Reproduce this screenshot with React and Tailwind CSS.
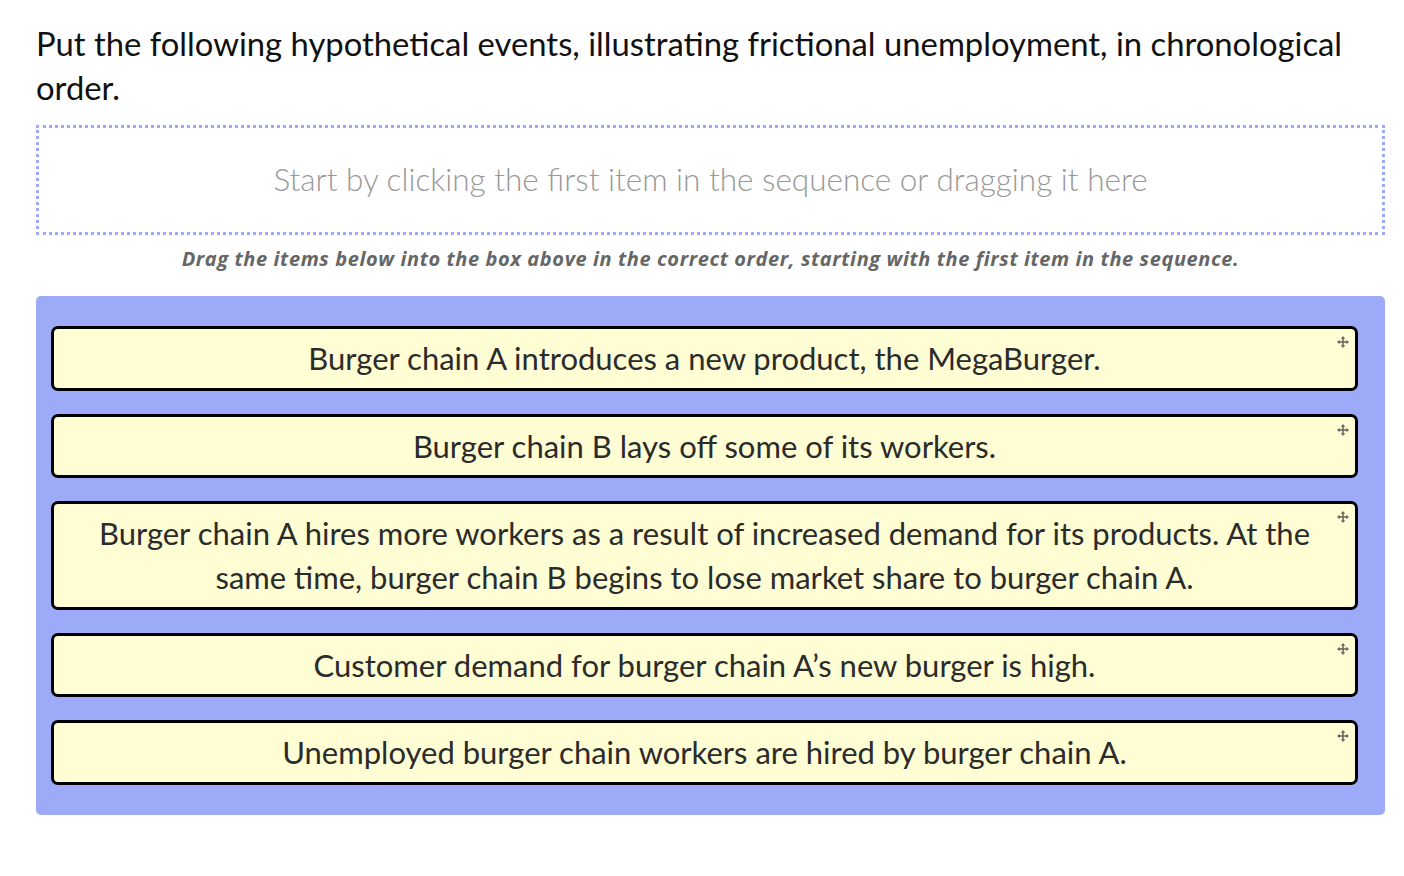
import React from 'react';

const items = [
  'Burger chain A introduces a new product, the MegaBurger.',
  'Burger chain B lays off some of its workers.',
  'Burger chain A hires more workers as a result of increased demand for its products. At the same time, burger chain B begins to lose market share to burger chain A.',
  'Customer demand for burger chain A\u2019s new burger is high.',
  'Unemployed burger chain workers are hired by burger chain A.',
];

// small four-way arrow drag handle
const MoveIcon = () => (
  <svg width="12" height="12" viewBox="0 0 12 12" fill="#6a6a60">
    <rect x="5.2" y="2" width="1.6" height="8" />
    <rect x="2" y="5.2" width="8" height="1.6" />
    <polygon points="6,0 3.7,2.7 8.3,2.7" />
    <polygon points="6,12 3.7,9.3 8.3,9.3" />
    <polygon points="0,6 2.7,3.7 2.7,8.3" />
    <polygon points="12,6 9.3,3.7 9.3,8.3" />
  </svg>
);

const App = () => {
  return (
    <main
      className="min-h-screen bg-white pl-[36px] pr-[19px] pt-[22px]"
      style={{ fontFamily: 'Lato, "Noto Sans", sans-serif' }}
    >
      {/* Question */}
      <h1 className="text-[32.8px] leading-[44px] font-normal text-[#111]">
        Put the following hypothetical events, illustrating frictional unemployment, in chronological order.
      </h1>

      {/* Drop zone */}
      <div className="mt-[15px] h-[110px] border-[3px] border-dotted border-[#9daaf8] flex items-center justify-center">
        <p className="text-[31.5px] font-light text-[#999]">
          Start by clicking the first item in the sequence or dragging it here
        </p>
      </div>

      {/* Instructions */}
      <p
        className="mt-[11px] text-center text-[20px] leading-[26px] font-bold italic tracking-[0.6px] text-[#666]"
        style={{ fontFamily: '"Open Sans", sans-serif' }}
      >
        Drag the items below into the box above in the correct order, starting with the first item in the sequence.
      </p>

      {/* Items */}
      <div className="mt-[24px] bg-[#9daaf8] rounded-[5px] pl-[15px] pr-[27px] py-[30px] flex flex-col gap-[23px]">
        {items.map((text, i) => (
          <div
            key={i}
            className="relative bg-[#fefdd3] border-[3px] border-black rounded-[7px] px-[34px] py-[7.25px] text-center text-[31px] leading-[44px] font-normal text-[#2b2b2b]"
          >
            {text}
            <span className="absolute top-[7px] right-[6px] leading-none">
              <MoveIcon />
            </span>
          </div>
        ))}
      </div>
    </main>
  );
};

export default App;
